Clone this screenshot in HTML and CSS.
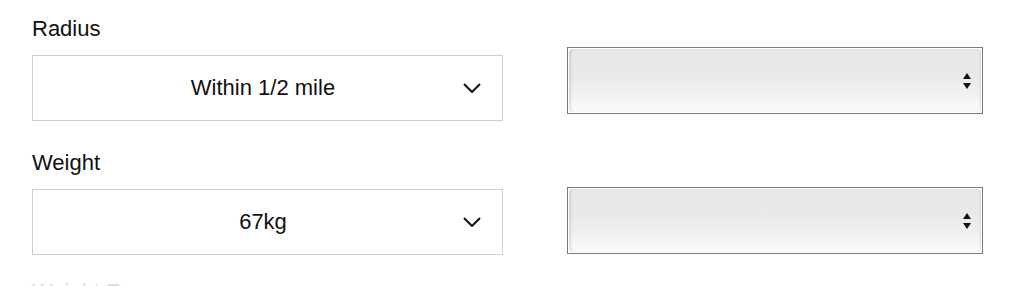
FILE: index.html
```html
<!DOCTYPE html>
<html>
<head>
<meta charset="utf-8">
<link rel="stylesheet" href="styles.css">
</head>
<body>
<div class="page">
  <div class="col-left">
    <div class="field">
      <div class="label">Radius</div>
      <div class="custom-select">
        <span class="value">Within 1/2 mile</span>
        <svg class="chevron" width="18" height="10" viewBox="0 0 18 10"><path d="M1 1 L9 9 L17 1" fill="none" stroke="#111" stroke-width="2"/></svg>
      </div>
    </div>
    <div class="field">
      <div class="label">Weight</div>
      <div class="custom-select">
        <span class="value">67kg</span>
        <svg class="chevron" width="18" height="10" viewBox="0 0 18 10"><path d="M1 1 L9 9 L17 1" fill="none" stroke="#111" stroke-width="2"/></svg>
      </div>
    </div>
    <div class="field">
      <div class="label faint">Weight Range</div>
    </div>
  </div>
  <div class="col-right">
    <div class="native-select first">
      <div class="inner">
        <svg class="updown" width="8" height="16" viewBox="0 0 8 16"><path d="M4 0 L8 6 L0 6 Z M0 10 L8 10 L4 16 Z" fill="#111"/></svg>
      </div>
    </div>
    <div class="native-select second">
      <div class="inner">
        <svg class="updown" width="8" height="16" viewBox="0 0 8 16"><path d="M4 0 L8 6 L0 6 Z M0 10 L8 10 L4 16 Z" fill="#111"/></svg>
      </div>
    </div>
  </div>
</div>
</body>
</html>
```

FILE: styles.css
```css
html, body {
  margin: 0;
  padding: 0;
  background: #fff;
  overflow: hidden;
}
body {
  font-family: "Liberation Sans", Arial, Helvetica, sans-serif;
  color: #111;
}
.page {
  display: flex;
  align-items: flex-start;
  padding-left: 32px;
}
.col-left {
  width: 471px;
  padding-top: 17px;
}
.field {
  margin-bottom: 30px;
}
.label {
  font-size: 22px;
  line-height: 24px;
  margin-bottom: 14px;
}
.label.faint {
  color: #dcdcdc;
  margin-top: -5px;
}
.custom-select {
  box-sizing: border-box;
  height: 66px;
  border: 1px solid #cfcfcf;
  display: flex;
  align-items: center;
  padding: 0 21px 0 0;
}
.value {
  flex: 1;
  text-align: center;
  font-size: 22px;
  padding-left: 30px;
}
.chevron {
  display: block;
}
.col-right {
  margin-left: 64px;
  width: 416px;
}
.native-select {
  box-sizing: border-box;
  height: 67px;
  border: 1px solid #7a7a7a;
  padding: 1px;
  background: #fff;
}
.native-select.first {
  margin-top: 47px;
}
.native-select.second {
  margin-top: 73px;
}
.inner {
  height: 100%;
  border-radius: 4px;
  background: linear-gradient(to bottom, #e8e8e8 0%, #e9e9e9 40%, #f1f1f1 70%, #fbfbfb 100%);
  box-shadow: inset 3px 0 3px -1px rgba(0,0,0,0.10), inset -2px 0 2px -1px rgba(0,0,0,0.08);
  display: flex;
  align-items: center;
  justify-content: flex-end;
  padding-right: 10px;
  box-sizing: border-box;
}
.updown {
  display: block;
}
```
